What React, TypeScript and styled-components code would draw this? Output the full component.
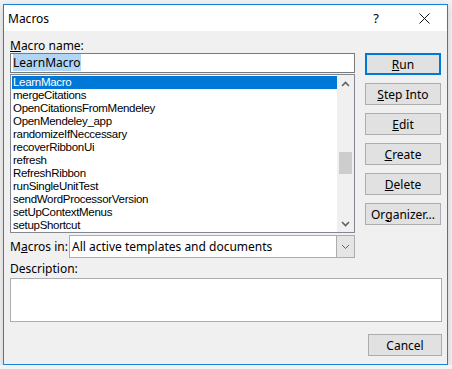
import React from "react";
import styled, { createGlobalStyle } from "styled-components";

const GlobalStyle = createGlobalStyle`
  body {
    margin: 0;
    background: #f2f2f2;
    font-family: "Noto Sans", "Liberation Sans", sans-serif;
    font-size: 12px;
    color: #000;
  }
`;

const macros = [
  "LearnMacro",
  "mergeCitations",
  "OpenCitationsFromMendeley",
  "OpenMendeley_app",
  "randomizeIfNeccessary",
  "recoverRibbonUi",
  "refresh",
  "RefreshRibbon",
  "runSingleUnitTest",
  "sendWordProcessorVersion",
  "setUpContextMenus",
  "setupShortcut",
];

interface IButton {
  label: React.ReactNode;
  isDefault?: boolean;
}

const sideButtons: IButton[] = [
  { label: <><u>R</u>un</>, isDefault: true },
  { label: <><u>S</u>tep Into</> },
  { label: <><u>E</u>dit</> },
  { label: <><u>C</u>reate</> },
  { label: <><u>D</u>elete</> },
  { label: <>Or<u>g</u>anizer...</> },
];

const Chevron: React.FC<{ up?: boolean; thin?: boolean }> = ({ up, thin }) => (
  <svg width="9" height="6" viewBox="0 0 9 6">
    <polyline
      points={up ? "1,5 4.5,1.5 8,5" : "1,1 4.5,4.5 8,1"}
      fill="none"
      stroke="#606060"
      strokeWidth={thin ? 1 : 1.6}
    />
  </svg>
);

const App: React.FC = () => {
  return (
    <>
      <GlobalStyle />
      <Window>
        <TitleBar>
          <Title>Macros</Title>
          <TitleButton>?</TitleButton>
          <TitleButton>
            <svg width="11" height="11" viewBox="0 0 11 11">
              <path d="M0.5 0.5 L10.5 10.5 M10.5 0.5 L0.5 10.5" stroke="#111" strokeWidth="1" />
            </svg>
          </TitleButton>
        </TitleBar>
        <Body>
          <Label>
            <u>M</u>acro name:
          </Label>
          <MainRow>
            <LeftColumn>
              <NameInput>
                <Selected>LearnMacro</Selected>
              </NameInput>
              <ListBox>
                <Items>
                  {macros.map((name, i) => (
                    <Item key={name} $active={i === 0}>
                      {name}
                    </Item>
                  ))}
                </Items>
                <ScrollBar>
                  <ArrowBox>
                    <Chevron up />
                  </ArrowBox>
                  <Track>
                    <Thumb />
                  </Track>
                  <ArrowBox>
                    <Chevron />
                  </ArrowBox>
                </ScrollBar>
              </ListBox>
              <MacrosInRow>
                <InlineLabel>
                  M<u>a</u>cros in:
                </InlineLabel>
                <Combo>
                  <ComboText>All active templates and documents</ComboText>
                  <ComboButton>
                    <Chevron thin />
                  </ComboButton>
                </Combo>
              </MacrosInRow>
            </LeftColumn>
            <ButtonColumn>
              {sideButtons.map((b, i) => (
                <Button key={i} $isDefault={b.isDefault}>
                  {b.label}
                </Button>
              ))}
            </ButtonColumn>
          </MainRow>
          <DescLabel>Description:</DescLabel>
          <DescBox />
          <Footer>
            <CancelButton>Cancel</CancelButton>
          </Footer>
        </Body>
      </Window>
    </>
  );
};

export default App;

const Window = styled.div`
  box-sizing: border-box;
  margin: 4px 0 0 3px;
  width: 445px;
  height: 361px;
  border: 1px solid #1883d7;
  background: #f0f0f0;
  display: flex;
  flex-direction: column;
  box-shadow: 0 2px 7px rgba(0, 0, 0, 0.18);
`;

const TitleBar = styled.div`
  height: 26px;
  background: #fff;
  display: flex;
  align-items: center;
  padding-left: 4px;
`;

const Title = styled.div`
  flex: 1;
  font-size: 12px;
  padding-top: 1px;
`;

const TitleButton = styled.div`
  width: 46px;
  height: 26px;
  display: flex;
  align-items: center;
  justify-content: center;
  font-size: 13px;
  padding-left: 2px;
`;

const Body = styled.div`
  flex: 1;
  display: flex;
  flex-direction: column;
  padding: 8px 5px 0 6px;
`;

const Label = styled.div`
  height: 14px;
  line-height: 14px;
`;

const MainRow = styled.div`
  display: flex;
  gap: 10px;
`;

const LeftColumn = styled.div`
  width: 345px;
  display: flex;
  flex-direction: column;
`;

const NameInput = styled.div`
  box-sizing: border-box;
  height: 20px;
  background: #fff;
  border: 1px solid #7a7a7a;
  padding: 2px 2px 0;
  line-height: 14px;
`;

const Selected = styled.span`
  background: #b0d5f5;
`;

const ListBox = styled.div`
  box-sizing: border-box;
  margin-top: 1px;
  height: 159px;
  background: #fff;
  border: 1px solid #828790;
  display: flex;
`;

const Items = styled.div`
  flex: 1;
  padding: 1px 0 0 1px;
`;

const Item = styled.div<{ $active?: boolean }>`
  height: 13px;
  line-height: 13px;
  font-family: "Liberation Sans", sans-serif;
  font-size: 11.5px;
  letter-spacing: -0.3px;
  padding-left: 1px;
  white-space: nowrap;
  background: ${(p) => (p.$active ? "#0078d7" : "transparent")};
  color: ${(p) => (p.$active ? "#fff" : "#000")};
`;

const ScrollBar = styled.div`
  width: 17px;
  background: #f0f0f0;
  display: flex;
  flex-direction: column;
`;

const ArrowBox = styled.div`
  height: 17px;
  display: flex;
  align-items: center;
  justify-content: center;
`;

const Track = styled.div`
  flex: 1;
  padding: 0 2px;
`;

const Thumb = styled.div`
  margin-top: 60px;
  height: 22px;
  background: #cdcdcd;
`;

const MacrosInRow = styled.div`
  margin-top: 2px;
  display: flex;
  align-items: center;
`;

const InlineLabel = styled.div`
  width: 59px;
`;

const Combo = styled.div`
  box-sizing: border-box;
  flex: 1;
  height: 23px;
  background: #fff;
  border: 1px solid #adadad;
  display: flex;
`;

const ComboText = styled.div`
  flex: 1;
  padding-left: 2px;
  line-height: 21px;
`;

const ComboButton = styled.div`
  width: 17px;
  background: #e5e5e5;
  border-left: 1px solid #adadad;
  display: flex;
  align-items: center;
  justify-content: center;
`;

const ButtonColumn = styled.div`
  width: 76px;
  display: flex;
  flex-direction: column;
  gap: 8px;
`;

const Button = styled.div<{ $isDefault?: boolean }>`
  box-sizing: border-box;
  height: 22px;
  background: #e1e1e1;
  border: ${(p) => (p.$isDefault ? "2px solid #0078d7" : "1px solid #adadad")};
  display: flex;
  align-items: center;
  justify-content: center;
  white-space: nowrap;
`;

const DescLabel = styled.div`
  margin-top: 4px;
  height: 14px;
  line-height: 14px;
`;

const DescBox = styled.div`
  box-sizing: border-box;
  margin-top: 2px;
  height: 44px;
  background: #fff;
  border: 1px solid #abadb3;
`;

const Footer = styled.div`
  margin-top: 12px;
  display: flex;
  justify-content: flex-end;
`;

const CancelButton = styled(Button)`
  width: 74px;
`;
